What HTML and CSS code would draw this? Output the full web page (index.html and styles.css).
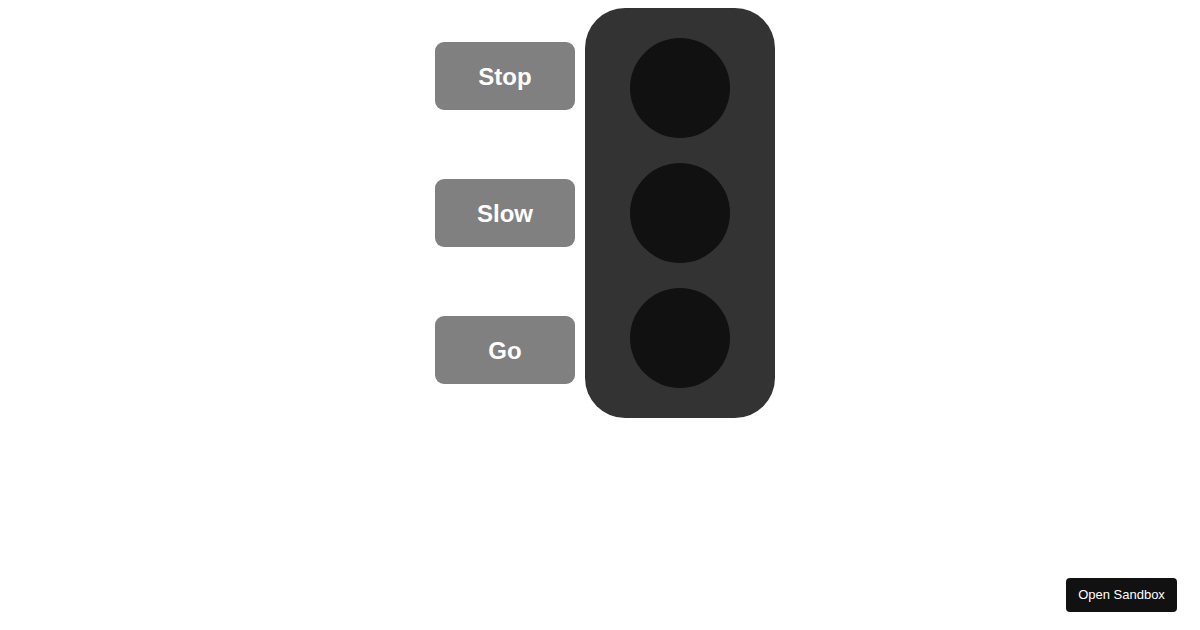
FILE: index.html
```html
<!DOCTYPE html>
<html>
<head>
<meta charset="utf-8">
<link rel="stylesheet" href="styles.css">
</head>
<body>
<div class="app">
  <div class="controls">
    <button class="btn">Stop</button>
    <button class="btn">Slow</button>
    <button class="btn">Go</button>
  </div>
  <div class="light">
    <div class="lamp"></div>
    <div class="lamp"></div>
    <div class="lamp"></div>
  </div>
</div>
<a class="sandbox">Open Sandbox</a>
</body>
</html>
```

FILE: styles.css
```css
html, body {
  margin: 0;
  background: #fff;
  font-family: "Liberation Sans", Arial, sans-serif;
}
body {
  padding: 8px;
  height: 630px;
  box-sizing: border-box;
}
.app {
  display: flex;
  justify-content: center;
  gap: 10px;
  padding-left: 10px;
}
.controls {
  display: flex;
  flex-direction: column;
  justify-content: space-around;
  width: 140px;
}
.btn {
  width: 140px;
  height: 68px;
  border: none;
  border-radius: 9px;
  background: #808080;
  color: #fff;
  font-family: "Liberation Sans", Arial, sans-serif;
  font-size: 24px;
  font-weight: bold;
  padding: 2px 0 0;
}
.light {
  width: 190px;
  box-sizing: border-box;
  padding: 30px 45px;
  background: #333333;
  border-radius: 40px;
  display: flex;
  flex-direction: column;
  gap: 25px;
}
.lamp {
  width: 100px;
  height: 100px;
  border-radius: 50%;
  background: #111111;
}
.sandbox {
  position: fixed;
  right: 23px;
  bottom: 18px;
  width: 111px;
  height: 34px;
  box-sizing: border-box;
  padding-bottom: 2px;
  display: flex;
  align-items: center;
  justify-content: center;
  background: #111111;
  color: #fff;
  border-radius: 4px;
  font-size: 13px;
  font-family: "Liberation Sans", Arial, sans-serif;
}
```
